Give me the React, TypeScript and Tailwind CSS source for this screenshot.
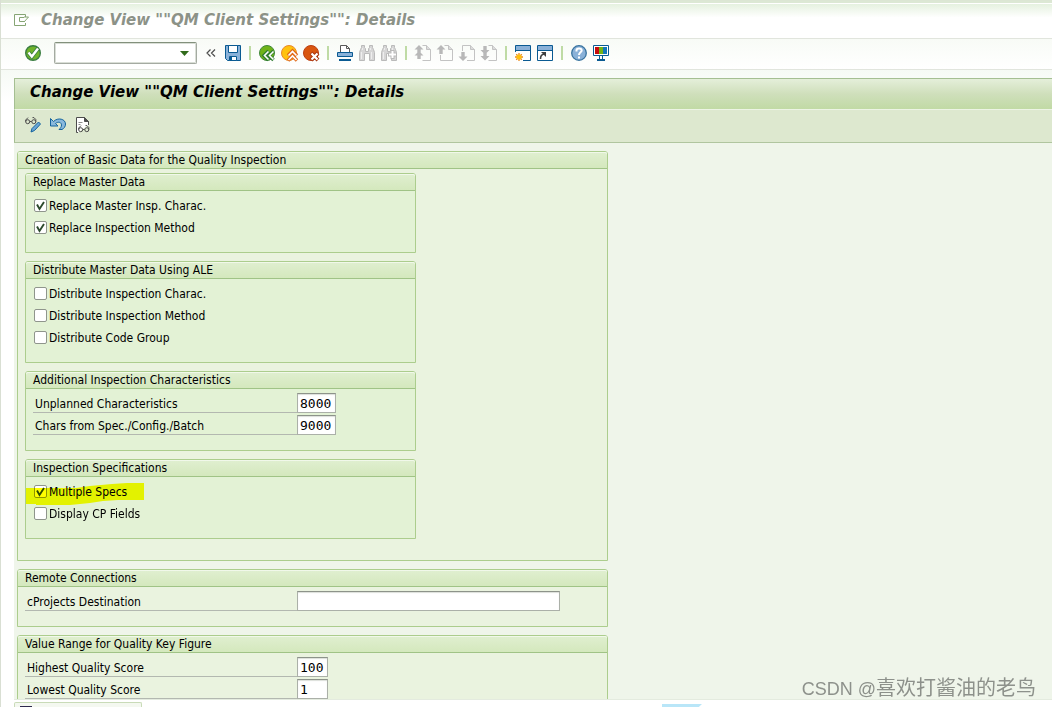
import React, { useState } from "react";

interface IconButtonProps {
  label: string;
  disabled?: boolean;
  children: React.ReactNode;
}

const IconButton: React.FC<IconButtonProps> = ({ label, disabled, children }) => (
  <button type="button" aria-label={label} disabled={disabled} className="size-4 shrink-0">
    <svg viewBox="0 0 16 16" className="size-4 overflow-visible" fill="none">
      {children}
    </svg>
  </button>
);

const Divider = () => <div className="mx-0.5 h-3.5 w-0.5 shrink-0 bg-[#bfdba5]" />;

// Page outline with a folded corner, shared by the paging icons
const PageOutline = () => (
  <>
    <path d="M7.500 .5h4l4 4v11h-8" stroke="#c3c3c3" />
    <path d="M11.500 .5v4h4" fill="#dcdcdc" stroke="#c3c3c3" />
  </>
);

const Binoculars = () => (
  <>
    <path
      d="M2.500 .5h3v2l1 1v3h3v-3l1-1v-2h3v2l1 2 1 3v8h-5v-7h-5v7h-5v-8l1-3 1-2z"
      fill="#d6d6d6"
      stroke="#bababa"
    />
    <path d="M2.500 7v7M12.500 7v7M3.500 3v2M11.500 3v2" stroke="#eeeeee" />
  </>
);

const WindowFrame = () => (
  <>
    <path d="M.5 .5h15v15H.5z" fill="#fff" stroke="#0a5a92" />
    <path d="M1 1h14v4H1z" fill="#8ab1d8" />
    <path d="M1 5.500h14" stroke="#0a5a92" />
  </>
);

const Glasses = () => (
  <g stroke="#4c4c4c">
    <circle cx="2.700" cy="4.700" r="2" />
    <circle cx="8.800" cy="4.700" r="2" />
    <path d="M.7 4.700V3L3 .6M4.700 4.500h2M10.800 4.700V2.500L9 .6H7.500" />
  </g>
);

function MainToolbar() {
  return (
    <div className="flex h-[31px] items-center gap-1.5 border-b border-[#e1e5dd] bg-linear-to-b from-[#f8fbf6] to-white pb-0.5 pl-6">
      <IconButton label="Enter">
        <circle cx="8" cy="8" r="7.300" fill="#6fb32a" stroke="#3a7d42" strokeWidth="1.400" />
        <path d="M3.500 7.500l3.300 4L13 3.500" stroke="#3a7d42" strokeWidth="4" />
        <path d="M3.500 7.500l3.300 4L13 3.500" stroke="#fff" strokeWidth="2.400" />
      </IconButton>
      <div className="ml-[7px] flex h-[22px] w-[143px] items-center rounded-xs border border-[#a4aaa1] border-t-[#82907c] bg-white shadow-[inset_0_0_0_1px_#d9ded6]">
        <input
          aria-label="Command"
          className="h-full min-w-0 flex-1 bg-transparent px-1 outline-none"
        />
        <button type="button" aria-label="Command history" className="flex h-full w-6 items-center justify-center">
          <svg viewBox="0 0 9 5" className="h-[5px] w-[9px]">
            <path d="M0 0h9L4.500 5z" fill="#316b1b" />
          </svg>
        </button>
      </div>
      <IconButton label="Hide command field">
        <path d="M7.500 4.500L4 8l3.500 3.500M12 4.500L8.500 8l3.500 3.500" stroke="#4d4d4d" strokeWidth="1.200" />
      </IconButton>
      <IconButton label="Save">
        <path d="M.5 .5h15v15h-13l-2-2z" fill="#8ab1d8" stroke="#0a5a92" />
        <path d="M3.500 .5h9v7h-9z" fill="#fff" stroke="#0a5a92" />
        <path d="M4.500 11.500h7v4h-7z" fill="#fff" stroke="#0a5a92" />
        <path d="M5 12h2v3H5z" fill="#0a5a92" />
      </IconButton>
      <Divider />
      <IconButton label="Back">
        <circle cx="8" cy="8" r="7.500" fill="#6fb319" stroke="#41883c" />
        <path d="M9.500 6L5 10.500 9.500 15M14.500 6L10 10.500l4.500 4.500" stroke="#2f7b31" strokeWidth="3.500" />
        <path d="M9.500 6.500L5.500 10.500l4 4M14.500 6.500l-4 4 4 4" stroke="#fff" strokeWidth="1.600" />
      </IconButton>
      <IconButton label="Exit">
        <circle cx="8" cy="8" r="7.500" fill="#ffc20d" stroke="#e9872b" />
        <path d="M7 10.500L11.500 6l4.500 4.500M7 15.500l4.500-4.500 4.500 4.500" stroke="#e06717" strokeWidth="3.500" />
        <path d="M7.500 10.500l4-4 4 4M7.500 15l4-4 4 4" stroke="#fff" strokeWidth="1.600" />
      </IconButton>
      <IconButton label="Cancel">
        <circle cx="8" cy="8" r="7.500" fill="#d9560f" stroke="#bc3f12" />
        <path d="M8 8l7 7M15 8l-7 7" stroke="#a93610" strokeWidth="4" />
        <path d="M8.500 8.500l6 6M14.500 8.500l-6 6" stroke="#fff" strokeWidth="2.200" />
      </IconButton>
      <Divider />
      <IconButton label="Print">
        <path d="M3.500 7V.5h6l3 3V7M9.500 .5v3h3" fill="#fff" stroke="#595959" />
        <path d="M.5 7.500h15v4H.5z" fill="#8ab1d8" stroke="#0a5a92" />
        <path d="M2 15h12" stroke="#0a5a92" strokeWidth="2" />
      </IconButton>
      <IconButton label="Find" disabled>
        <Binoculars />
      </IconButton>
      <IconButton label="Find next" disabled>
        <Binoculars />
        <path d="M11.500 5v9M7 9.500h9" stroke="#b9b9b9" strokeWidth="4" />
        <path d="M11.500 6v7M8 9.500h7" stroke="#fff" strokeWidth="2" />
      </IconButton>
      <Divider />
      <IconButton label="First page" disabled>
        <PageOutline />
        <path d="M4 0l4.500 4.500H5.700V8H2.300V4.500H-.5zM4 6l4.500 4.500H5.700V14H2.300v-3.500H-.5z" fill="#b8b8b8" />
      </IconButton>
      <IconButton label="Previous page" disabled>
        <path d="M7.500 .5h4l4 4v11h-12V10" stroke="#c3c3c3" />
        <path d="M11.500 .5v4h4" fill="#dcdcdc" stroke="#c3c3c3" />
        <path d="M4 0l4.500 4.500H5.700V9H2.300V4.500H-.5z" fill="#b8b8b8" />
      </IconButton>
      <IconButton label="Next page" disabled>
        <path d="M3.500 6V.5h8l4 4v11H8" stroke="#c3c3c3" />
        <path d="M11.500 .5v4h4" fill="#dcdcdc" stroke="#c3c3c3" />
        <path d="M2.300 7h3.400v4.500h2.800L4 16l-4.500-4.500h2.800z" fill="#b8b8b8" />
      </IconButton>
      <IconButton label="Last page" disabled>
        <PageOutline />
        <path d="M2.300 1h3.400v4h2.800L4 9.500-.5 5h2.800zM2.300 7.500h3.400v3.500h2.800L4 15.500-.5 11h2.800z" fill="#b8b8b8" />
      </IconButton>
      <Divider />
      <IconButton label="New session">
        <WindowFrame />
        <path d="M-1 7h9v9h-9z" fill="#fff" />
        <path d="M4 8v8M0 12h8M1.200 9.200l5.600 5.600M6.800 9.200l-5.600 5.600" stroke="#ec8a1c" strokeWidth="1.300" />
        <circle cx="4" cy="12" r="2.500" fill="#ffc20d" />
      </IconButton>
      <IconButton label="Create shortcut">
        <WindowFrame />
        <path d="M3.500 14c0-3 1-4.500 3.500-5" stroke="#404040" strokeWidth="1.600" />
        <path d="M4 7h5v5z" fill="#404040" />
      </IconButton>
      <Divider />
      <IconButton label="Help">
        <circle cx="8" cy="8" r="7.300" fill="#8ab1d8" stroke="#39739f" strokeWidth="1.300" />
        <path d="M5.500 6.500V5.300C5.500 4 6.500 3.500 8 3.500s2.700.7 2.700 2c0 1.800-2.700 2-2.700 4.500" stroke="#fff" strokeWidth="2" />
        <path d="M7 11.500h2v2H7z" fill="#fff" />
      </IconButton>
      <IconButton label="Customize layout">
        <path d="M.5 .5h15v10H.5z" fill="#fff" stroke="#0a5a92" />
        <path d="M2 2h4v7H2z" fill="#c60c0c" />
        <path d="M6 2h4v7H6z" fill="#73b315" />
        <path d="M10 2h4v7h-4z" fill="#1477b8" />
        <path d="M6.500 11v3M9.500 11v3" stroke="#0a5a92" />
        <path d="M4 15h8" stroke="#0a5a92" strokeWidth="2" />
      </IconButton>
    </div>
  );
}

interface GroupBoxProps {
  title: string;
  nested?: boolean;
  children: React.ReactNode;
}

const GroupBox: React.FC<GroupBoxProps> = ({ title, nested, children }) => (
  <section
    className={`w-full rounded-t-[3px] border border-[#accd8d] pb-[13px] ${
      nested ? "max-w-[391px] bg-[#e3f2d5]" : "max-w-[591px] bg-[#eaf3df]"
    }`}
  >
    <h2 className="h-[17px] rounded-t-xs border-b border-[#a0c386] bg-linear-to-b from-[#e0efd0] to-[#d4e8bd] pl-[7px] leading-4 shadow-[inset_0_1px_0_#f1f8ea]">
      {title}
    </h2>
    <div className="px-[7px] pt-1">{children}</div>
  </section>
);

interface CheckRowProps {
  label: string;
  defaultChecked?: boolean;
  marked?: boolean;
}

const CheckRow: React.FC<CheckRowProps> = ({ label, defaultChecked = false, marked }) => {
  const [checked, setChecked] = useState<boolean>(defaultChecked);

  return (
    <label className="relative flex h-[22px] items-start gap-0.5 pt-1 pl-px leading-[14px]">
      <span className="grid size-[13px] shrink-0">
        <input
          type="checkbox"
          checked={checked}
          onChange={(e) => setChecked(e.target.checked)}
          className="col-start-1 row-start-1 size-[13px] appearance-none rounded-xs border border-[#8f958c] bg-white"
        />
        {checked && (
          <svg viewBox="0 0 13 13" className="pointer-events-none col-start-1 row-start-1 size-[13px]">
            <path d="M3 5.500l2.500 4.500L10 3" fill="none" stroke="#2c4a2c" strokeWidth="1.900" />
          </svg>
        )}
      </span>
      <span>{label}</span>
      {/* highlighter stroke */}
      {marked && (
        <svg
          viewBox="0 0 119 22"
          className="pointer-events-none absolute top-0.5 -left-2 h-[22px] w-[119px] mix-blend-multiply"
        >
          <path d="M1 5h50l14-2 22-2 15-1h17v17H93l-15 1-13 2-20 2H11v-1H1z" fill="#ff0" />
        </svg>
      )}
    </label>
  );
};

interface FieldRowProps {
  id: string;
  label: string;
  value?: string;
  nested?: boolean;
  inputClass: string;
}

const FieldRow: React.FC<FieldRowProps> = ({ id, label, value = "", nested, inputClass }) => (
  <div className="flex h-[22px] items-start">
    <label
      htmlFor={id}
      className={`h-5 shrink-0 border-b border-[#b3b8b0] pt-px pl-0.5 leading-5 ${
        nested ? "w-[264px]" : "w-[272px]"
      }`}
    >
      {label}
    </label>
    <input
      id={id}
      defaultValue={value}
      className={`h-5 rounded-none border border-[#abb0a8] border-t-[#8d938a] bg-white px-0.5 font-['DejaVu_Sans_Mono','Liberation_Mono',monospace] text-[13px] shadow-[inset_0_1px_1px_#dcdfda] outline-none ${inputClass}`}
    />
  </div>
);

export default function App() {
  return (
    <div className="relative flex h-screen flex-col overflow-hidden border-l border-[#d9dfd3] bg-white font-['DejaVu_Sans_Condensed','DejaVu_Sans',sans-serif] text-[12px] text-black">
      <header>
        <div className="h-1 border-y border-t-[#dce6d4] border-b-white bg-[#dce8d4]" />
        <div className="flex h-[35px] items-center gap-3 border-b border-[#e1e5dd] bg-linear-to-b from-[#e5f1df] to-white to-40% pb-0.5 pl-[13px]">
          <svg viewBox="0 0 15 12" className="h-3 w-[15px]" fill="none" stroke="#86a574">
            <path d="M11.500 3V.5H.5v11h11V9" />
            <path d="M10 3.500H5.500v4h5M10 3h4.500L10 8" />
          </svg>
          <span className="font-['DejaVu_Sans',sans-serif] text-[15px] font-bold italic text-[#8c9287]">
            Change View ""QM Client Settings"": Details
          </span>
        </div>
        <MainToolbar />
      </header>

      <div className="flex min-h-0 flex-1 flex-col bg-linear-to-b from-[#f6faf5] to-white to-5% pt-2 pl-[13px]">
        <div className="flex h-8 items-center border-t border-l border-b border-t-[#a5bf92] border-b-[#edf4e5] border-l-[#a5bf92] bg-linear-to-b from-[#e5efda] via-[#cfdfbb] to-[#c1daa5] pl-[15px]">
          <h1 className="pb-1 font-['DejaVu_Sans',sans-serif] text-[15px] font-bold italic">
            Change View ""QM Client Settings"": Details
          </h1>
        </div>
        <div className="flex h-[33px] items-center gap-[9px] border-b border-l border-b-[#b0c59f] border-l-[#a5bf92] bg-[#dde8cf] pb-0.5 pl-2.5">
          <IconButton label="Display / Change">
            <Glasses />
            <path d="M6 15l1-3.500L13.500 5l2 2L9.500 13.500z" fill="#6aa5d6" stroke="#14639d" />
          </IconButton>
          <IconButton label="Undo">
            <path
              d="M.5 1.500v7.500h7.500L5.500 6.500c3-2.500 6-1 6 1.500 0 2-1 3-2.500 4.500h3c2-1 3.500-3 3.500-5.500C15.500 2 8 0 3.500 4.500z"
              fill="#8ab9dd"
              stroke="#14639d"
            />
          </IconButton>
          <IconButton label="Display document">
            <path d="M3 15.500H1.500V.5h8l4 4V8" fill="#fff" stroke="#4c4c4c" />
            <path d="M9.500 .5v4h4z" fill="#4c4c4c" stroke="#4c4c4c" />
            <path d="M3.500 5.500h4M3.500 7.500h2" stroke="#8b8b8b" />
            <g transform="translate(3 8)">
              <Glasses />
            </g>
          </IconButton>
        </div>

        <main className="flex min-h-0 flex-1 flex-col gap-2 overflow-y-auto border-b border-[#e4ebdf] bg-[#eff5ea] pt-2 pl-[3px] [scrollbar-width:none] *:shrink-0">
          <GroupBox title="Creation of Basic Data for the Quality Inspection">
            <div className="flex flex-col gap-2 pb-2">
              <GroupBox title="Replace Master Data" nested>
                <CheckRow label="Replace Master Insp. Charac." defaultChecked />
                <CheckRow label="Replace Inspection Method" defaultChecked />
              </GroupBox>
              <GroupBox title="Distribute Master Data Using ALE" nested>
                <CheckRow label="Distribute Inspection Charac." />
                <CheckRow label="Distribute Inspection Method" />
                <CheckRow label="Distribute Code Group" />
              </GroupBox>
              <GroupBox title="Additional Inspection Characteristics" nested>
                <FieldRow id="unplanned" label="Unplanned Characteristics" value="8000" inputClass="w-[39px]" nested />
                <FieldRow id="from-spec" label="Chars from Spec./Config./Batch" value="9000" inputClass="w-[39px]" nested />
              </GroupBox>
              <GroupBox title="Inspection Specifications" nested>
                <CheckRow label="Multiple Specs" defaultChecked marked />
                <CheckRow label="Display CP Fields" />
              </GroupBox>
            </div>
          </GroupBox>

          <GroupBox title="Remote Connections">
            <FieldRow id="destination" label="cProjects Destination" inputClass="w-[263px]" />
          </GroupBox>

          <GroupBox title="Value Range for Quality Key Figure">
            <FieldRow id="highest" label="Highest Quality Score" value="100" inputClass="w-[31px]" />
            <FieldRow id="lowest" label="Lowest Quality Score" value="1" inputClass="w-[31px]" />
          </GroupBox>
        </main>
      </div>

      <footer className="flex h-[7px] shrink-0 items-end bg-white pl-[13px]">
        <div className="h-[5px] w-32 rounded-t-xs border border-b-0 border-[#c9dbb8] bg-[#f4f8f0] px-[5px] pt-[3px]">
          <div className="h-px w-3 bg-[#2e2a4d]" />
        </div>
        <div className="ml-[520px] h-[3px] w-10 bg-[#b9e6f8] [clip-path:polygon(0_0,100%_0,92%_100%,0_100%)]" />
      </footer>

      <div className="pointer-events-none absolute right-4 bottom-1 font-['Liberation_Sans','Noto_Sans_CJK_SC',sans-serif] text-[20px] leading-7 text-[#8d918b]">
        <span className="text-[18px]">CSDN @</span>喜欢打酱油的老鸟
      </div>
    </div>
  );
}
